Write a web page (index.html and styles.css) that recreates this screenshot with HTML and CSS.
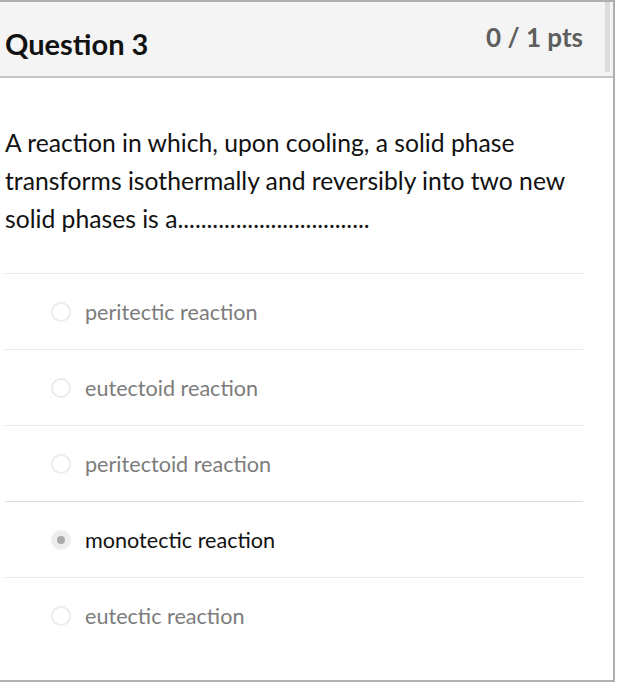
FILE: index.html
```html
<!DOCTYPE html>
<html>
<head>
<meta charset="utf-8">
<link rel="stylesheet" href="styles.css">
</head>
<body>
<div class="card">
  <div class="header">
    <h2 class="title">Question 3</h2>
    <div class="pts">0 / 1 pts</div>
    <div class="scroll"></div>
  </div>
  <div class="content">
    <p class="question">A reaction in which, upon cooling, a solid phase transforms isothermally and reversibly into two new solid phases is a.................................</p>
    <div class="answers">
      <div class="answer"><span class="radio"></span><span class="label">peritectic reaction</span></div>
      <div class="answer"><span class="radio"></span><span class="label">eutectoid reaction</span></div>
      <div class="answer"><span class="radio"></span><span class="label">peritectoid reaction</span></div>
      <div class="answer selected"><span class="radio"></span><span class="label">monotectic reaction</span></div>
      <div class="answer"><span class="radio"></span><span class="label">eutectic reaction</span></div>
    </div>
  </div>
</div>
</body>
</html>
```
FILE: styles.css
```css
html, body {
  margin: 0;
  padding: 0;
  background: #fff;
}
body {
  font-family: Lato, "Open Sans", sans-serif;
  color: #1a1a1a;
}
.card {
  width: 615px;
  height: 682px;
  box-sizing: border-box;
  border-top: 2px solid #b0b0b0;
  border-right: 2px solid #b0b0b0;
  border-bottom: 2px solid #b0b0b0;
  display: flex;
  flex-direction: column;
}
.header {
  position: relative;
  height: 76px;
  box-sizing: border-box;
  background: #f4f4f4;
  border-bottom: 2px solid #c4c4c4;
  display: flex;
  justify-content: space-between;
  align-items: flex-start;
  padding: 0 30px 0 5px;
}
.title {
  margin: 24px 0 0 0;
  font-size: 29px;
  font-weight: 700;
  line-height: 36px;
  color: #111;
}
.pts {
  margin-top: 18px;
  font-size: 26px;
  font-weight: 700;
  line-height: 34px;
  color: #5e5e5e;
}
.scroll {
  position: absolute;
  right: 3px;
  top: 0;
  width: 5px;
  height: 70px;
  background: #dcdcdc;
}
.content {
  padding: 46px 30px 0 5px;
}
.question {
  margin: 0;
  font-size: 24.7px;
  line-height: 38px;
  color: #111;
}
.answers {
  margin-top: 35px;
}
.answer {
  height: 75px;
  border-top: 1px solid #e8e8e8;
  display: flex;
  align-items: center;
  gap: 14px;
  padding-left: 46px;
}
.answer:nth-child(4) {
  border-top-color: #dcdcdc;
}
.radio {
  width: 20px;
  height: 20px;
  box-sizing: border-box;
  border-radius: 50%;
  border: 2px solid #ececec;
  background: #fff;
  display: flex;
  align-items: center;
  justify-content: center;
}
.selected .radio {
  background: #ededed;
  border-color: #ededed;
}
.selected .radio::after {
  content: "";
  width: 8px;
  height: 8px;
  border-radius: 50%;
  background: #a9a9a9;
}
.label {
  font-size: 21.6px;
  color: #7c7c7c;
}
.selected .label {
  color: #111;
}
```
